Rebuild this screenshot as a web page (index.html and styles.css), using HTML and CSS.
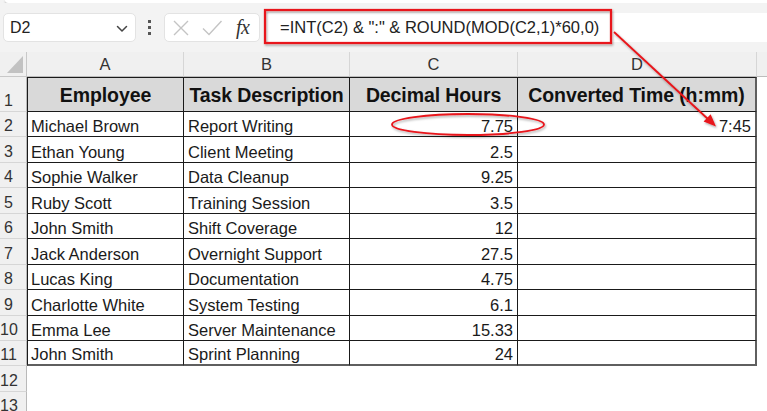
FILE: index.html
```html
<!DOCTYPE html>
<html>
<head>
<meta charset="utf-8">
<link rel="stylesheet" href="styles.css">
</head>
<body>
<div class="app">
  <div class="ribbon-edge"></div>
  <div class="fbar">
    <div class="namebox">
      <span class="ref">D2</span>
      <svg class="chev" width="12" height="8" viewBox="0 0 12 8"><path d="M1.5 1.5 L6 6 L10.5 1.5" fill="none" stroke="#444" stroke-width="1.5" stroke-linecap="round" stroke-linejoin="round"/></svg>
    </div>
    <div class="dots"><i></i><i></i><i></i></div>
    <div class="btnbox">
      <svg width="18" height="18" viewBox="0 0 18 18"><path d="M2 2 L16 16 M16 2 L2 16" stroke="#c4c4c4" stroke-width="1.4" fill="none"/></svg>
      <svg width="22" height="18" viewBox="0 0 22 18"><path d="M2 9.5 L8 15.5 L20.5 2" stroke="#c4c4c4" stroke-width="1.4" fill="none"/></svg>
      <span class="fx">fx</span>
    </div>
    <div class="formula">=INT(C2) &amp; ":" &amp; ROUND(MOD(C2,1)*60,0)</div>
  </div>

  <div class="sheet">
    <div class="corner"><i></i></div>
    <div class="ch">A</div><div class="ch">B</div><div class="ch">C</div><div class="ch">D</div><div class="ch rest"></div>

    <div class="rh"><span>1</span></div>
    <div class="t hd a r1">Employee</div>
    <div class="t hd r1">Task Description</div>
    <div class="t hd r1">Decimal Hours</div>
    <div class="t hd d r1">Converted Time (h:mm)</div>
    <div class="e"></div>

    <div class="rh"><span>2</span></div>
    <div class="t a">Michael Brown</div><div class="t">Report Writing</div><div class="t num">7.75</div><div class="t d num">7:45</div><div class="e"></div>

    <div class="rh"><span>3</span></div>
    <div class="t a">Ethan Young</div><div class="t">Client Meeting</div><div class="t num">2.5</div><div class="t d"></div><div class="e"></div>

    <div class="rh"><span>4</span></div>
    <div class="t a">Sophie Walker</div><div class="t">Data Cleanup</div><div class="t num">9.25</div><div class="t d"></div><div class="e"></div>

    <div class="rh"><span>5</span></div>
    <div class="t a">Ruby Scott</div><div class="t">Training Session</div><div class="t num">3.5</div><div class="t d"></div><div class="e"></div>

    <div class="rh"><span>6</span></div>
    <div class="t a">John Smith</div><div class="t">Shift Coverage</div><div class="t num">12</div><div class="t d"></div><div class="e"></div>

    <div class="rh"><span>7</span></div>
    <div class="t a">Jack Anderson</div><div class="t">Overnight Support</div><div class="t num">27.5</div><div class="t d"></div><div class="e"></div>

    <div class="rh"><span>8</span></div>
    <div class="t a">Lucas King</div><div class="t">Documentation</div><div class="t num">4.75</div><div class="t d"></div><div class="e"></div>

    <div class="rh"><span>9</span></div>
    <div class="t a">Charlotte White</div><div class="t">System Testing</div><div class="t num">6.1</div><div class="t d"></div><div class="e"></div>

    <div class="rh"><span>10</span></div>
    <div class="t a">Emma Lee</div><div class="t">Server Maintenance</div><div class="t num">15.33</div><div class="t d"></div><div class="e"></div>

    <div class="rh"><span>11</span></div>
    <div class="t a lr">John Smith</div><div class="t lr">Sprint Planning</div><div class="t num lr">24</div><div class="t d lr"></div><div class="e"></div>

    <div class="rh"><span>12</span></div>
    <div class="e"></div><div class="e"></div><div class="e"></div><div class="e"></div><div class="e"></div>

    <div class="rh"><span>13</span></div>
    <div class="e"></div><div class="e"></div><div class="e"></div><div class="e"></div><div class="e"></div>
  </div>

  <svg class="annot" width="767" height="411" viewBox="0 0 767 411">
    <defs>
      <filter id="sh" x="-10%" y="-10%" width="120%" height="130%">
        <feDropShadow dx="1" dy="1.5" stdDeviation="1" flood-color="#000" flood-opacity="0.35"/>
      </filter>
    </defs>
    <rect x="265" y="10" width="346" height="33" fill="none" stroke="#e8141a" stroke-width="2.2" filter="url(#sh)"/>
    <ellipse cx="468" cy="124.5" rx="76" ry="10.5" fill="none" stroke="#e8141a" stroke-width="1.8" filter="url(#sh)"/>
    <g filter="url(#sh)">
      <line x1="614" y1="32" x2="709" y2="120" stroke="#e8141a" stroke-width="1.8"/>
      <polygon points="716,126.5 703.6,121.6 710.6,114.2" fill="#e8141a"/>
    </g>
  </svg>
</div>
</body>
</html>
```

FILE: styles.css
```css
html, body {
  margin: 0;
  padding: 0;
}
body {
  width: 767px;
  height: 411px;
  overflow: hidden;
  background: #f3f3f3;
  font-family: "Liberation Sans", Arial, sans-serif;
}
.app {
  position: relative;
  width: 767px;
  height: 411px;
  overflow: hidden;
}
.ribbon-edge {
  height: 3px;
  margin-left: 5px;
  background: #ffffff;
  border-bottom-left-radius: 4px;
  box-shadow: 0 1px 2px rgba(0,0,0,0.25);
}
.fbar {
  height: 49px;
  display: flex;
  align-items: center;
  background: #f3f3f3;
}
.namebox {
  margin-left: 3px;
  width: 133px;
  height: 29px;
  box-sizing: border-box;
  background: #fff;
  border: 1px solid #e3e3e3;
  border-radius: 5px;
  display: flex;
  align-items: center;
  justify-content: space-between;
  padding: 0 7px 0 6px;
}
.ref {
  font-size: 16px;
  color: #222;
}
.chev {
  margin-top: 2px;
}
.dots {
  margin-left: 12px;
  width: 4px;
  display: flex;
  flex-direction: column;
  gap: 3px;
}
.dots i {
  display: block;
  width: 3px;
  height: 3px;
  background: #555;
}
.btnbox {
  margin-left: 12px;
  width: 96px;
  height: 29px;
  box-sizing: border-box;
  background: #fff;
  border: 1px solid #e3e3e3;
  border-radius: 5px;
  display: flex;
  align-items: center;
  padding-left: 7px;
  gap: 11px;
}
.fx {
  font-family: "Liberation Serif", "Times New Roman", serif;
  font-style: italic;
  font-size: 20px;
  color: #333;
  margin-left: 2px;
  letter-spacing: -0.5px;
}
.formula {
  margin-left: 5px;
  flex: 1;
  height: 29px;
  box-sizing: border-box;
  background: #fff;
  border-radius: 5px 0 0 5px;
  padding-left: 15px;
  font-size: 16.5px;
  color: #222;
  line-height: 29px;
  white-space: nowrap;
}

.sheet {
  display: grid;
  grid-template-columns: 27px 157px 166px 168px 239px 10px;
  grid-template-rows: 25px 35px repeat(12, 25.45px);
  background: #fff;
}
.sheet > div {
  box-sizing: border-box;
  overflow: hidden;
  white-space: nowrap;
}
.corner {
  background: #f0f0f0;
  border-right: 1px solid #c8c8c8;
  border-bottom: 1px solid #c8c8c8;
  position: relative;
}
.corner i {
  position: absolute;
  left: 7px;
  top: 4px;
  width: 16px;
  height: 17px;
  background: #c2c2c2;
  clip-path: polygon(100% 0, 100% 100%, 0 100%);
}
.ch {
  background: #f0f0f0;
  border-right: 1px solid #d6d6d6;
  border-bottom: 1px solid #bdbdbd;
  color: #333;
  font-size: 16.5px;
  display: flex;
  align-items: center;
  justify-content: center;
}
.ch.rest {
  border-right: none;
}
.rh {
  background: #f0f0f0;
  border-right: 1px solid #b9b9b9;
  border-bottom: 1px solid #d6d6d6;
  color: #333;
  font-size: 16px;
  display: flex;
  align-items: flex-end;
  padding-bottom: 1px;
}
.rh span {
  display: block;
  width: 17px;
  text-align: center;
  line-height: 19px;
}
.t {
  border-right: 1px solid #1a1a1a;
  border-bottom: 1px solid #1a1a1a;
  font-size: 16.5px;
  color: #1a1a1a;
  display: flex;
  align-items: flex-end;
  padding: 0 4px 0 4px;
  line-height: 20px;
}
.t.a {
  border-left: 1px solid #1a1a1a;
  padding-left: 3px;
}
.t.num {
  justify-content: flex-end;
}
.t.d {
  border-right: 2px solid #5f5f5f;
}
.t.lr {
  border-bottom: 2px solid #5f5f5f;
}
.t.hd {
  background: #d9d9d9;
  font-weight: bold;
  font-size: 19.5px;
  color: #111;
  justify-content: center;
  align-items: center;
  padding: 0 2px;
  letter-spacing: -0.1px;
}
.t.r1 {
  border-top: 1px solid #1a1a1a;
}
.e {
  background: #fff;
}
.annot {
  position: absolute;
  left: 0;
  top: 0;
  pointer-events: none;
}
```
